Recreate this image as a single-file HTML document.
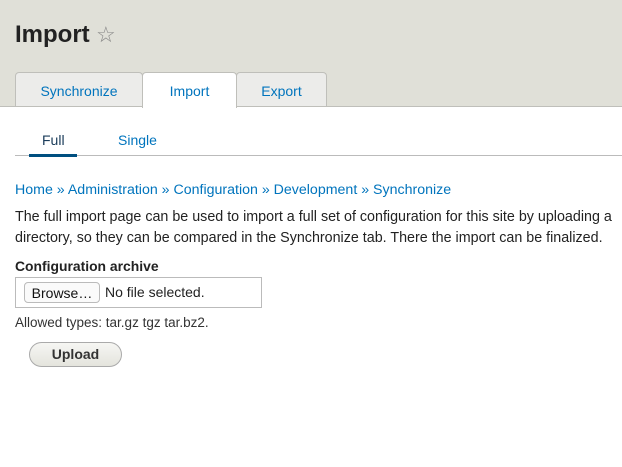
<!DOCTYPE html>
<html><head><style>
body{margin:0;width:622px;height:467px;overflow:hidden;background:#fff;font-family:"Liberation Sans",sans-serif;color:#333;position:relative}
.hd{position:absolute;left:0;top:0;width:622px;height:106px;background:#e0e0d8;border-bottom:1px solid #bfbfba}
h1{position:absolute;left:15px;top:21px;margin:0;font-size:24px;font-weight:bold;color:#222}
.star{position:absolute;left:96px;top:22px;font-size:22px;color:#888}
.tab{position:absolute;top:72px;height:34px;border:1px solid #bfbfba;border-bottom:none;border-radius:4px 4px 0 0;background:#ececea;color:#0074bd;font-size:14px;text-align:center;line-height:36px;box-sizing:border-box}
.tab.a{background:#fff;height:36px}
.s{position:absolute;top:132px;font-size:14px;color:#0074bd}
.line{position:absolute;left:15px;top:155px;width:607px;height:1px;background:#bbb}
.act{position:absolute;left:29px;top:154px;width:48px;height:3px;background:#004f80}
.bc{position:absolute;left:15px;top:182px;font-size:14.2px;color:#0074bd;white-space:nowrap}
.d{position:absolute;left:15px;top:207px;font-size:14.3px;line-height:21px;white-space:nowrap;color:#222}
.lb{position:absolute;left:15px;top:258px;font-size:13.9px;font-weight:bold;color:#222}
.fb{position:absolute;left:15px;top:277px;width:247px;height:31px;border:1px solid #bbb;box-sizing:border-box;background:#fff}
.br{position:absolute;left:8px;top:4px;height:21px;width:76px;border:1px solid #bbb;border-radius:4px;background:#fafafa;font-size:14px;line-height:20px;text-align:center;box-sizing:border-box;color:#111}
.nf{position:absolute;left:89px;top:6px;font-size:14px;color:#222}
.al{position:absolute;left:15px;top:315px;font-size:13.5px;color:#333}
.up{position:absolute;left:29px;top:342px;width:93px;height:25px;border:1px solid #aaa;border-radius:13px;background:linear-gradient(#f6f6f3,#e4e4dd);box-sizing:border-box;font-size:14px;font-weight:bold;text-align:center;line-height:23px;color:#333}
</style></head><body>
<div class="hd"></div>
<h1>Import</h1><div class="star">☆</div>
<div class="tab" style="left:15px;width:128px">Synchronize</div>
<div class="tab a" style="left:142px;width:95px">Import</div>
<div class="tab" style="left:236px;width:91px">Export</div>
<div class="s" style="left:42px;color:#1a3c5a">Full</div>
<div class="s" style="left:118px">Single</div>
<div class="line"></div><div class="act"></div>
<div class="bc">Home » Administration » Configuration » Development » Synchronize</div>
<div class="d">The full import page can be used to import a full set of configuration for this site by uploading a<br>directory, so they can be compared in the Synchronize tab. There the import can be finalized.</div>
<div class="lb">Configuration archive</div>
<div class="fb"><div class="br">Browse…</div><div class="nf">No file selected.</div></div>
<div class="al">Allowed types: tar.gz tgz tar.bz2.</div>
<div class="up">Upload</div>
</body></html>
